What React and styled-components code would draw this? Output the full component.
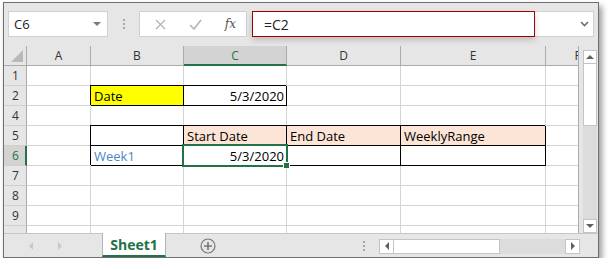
import styled, { createGlobalStyle } from "styled-components";

const GREEN = "#217346";

const Global = createGlobalStyle`
  body {
    margin: 0;
    background: #fff;
    font-family: "Open Sans", "Liberation Sans", sans-serif;
  }
`;

const Window = styled.div`
  box-sizing: border-box;
  margin: 2px 0 0 3px;
  width: 596px;
  height: 256px;
  border: 1px solid #6e6e6e;
  background: #e6e6e6;
  box-shadow: 3px 4px 6px rgba(0, 0, 0, 0.4);
  display: flex;
  flex-direction: column;
  overflow: hidden;
`;

const FormulaBar = styled.div`
  display: flex;
  height: 26px;
  margin: 8px 0 9px 4px;
`;

const NameBox = styled.div`
  box-sizing: border-box;
  width: 100px;
  background: #fff;
  border: 1px solid #d0d0d0;
  display: flex;
  align-items: center;
  justify-content: space-between;
  padding: 0 6px 0 5px;
  font-size: 13px;
  color: #222;
`;

const Caret = styled.span`
  width: 0;
  height: 0;
  border-left: 4px solid transparent;
  border-right: 4px solid transparent;
  border-top: 4px solid #7a7a7a;
`;

const Grip = styled.div`
  width: 31px;
  display: flex;
  flex-direction: column;
  align-items: center;
  justify-content: center;
  gap: 2px;

  span {
    width: 2px;
    height: 2px;
    background: #a8a8a8;
  }
`;

const FxBox = styled.div`
  box-sizing: border-box;
  width: 108px;
  margin-right: 5px;
  background: #fff;
  border: 1px solid #d0d0d0;
  display: flex;
  align-items: center;
  padding: 0 10px 0 15px;
  justify-content: space-between;
`;

const FxLabel = styled.span`
  font-family: "DejaVu Serif", "Liberation Serif", serif;
  font-style: italic;
  font-size: 12px;
  color: #555;
`;

const FormulaInput = styled.div`
  box-sizing: border-box;
  width: 283px;
  background: #fff;
  border: 1px solid #a00000;
  box-shadow: 0 3px 6px rgba(0, 0, 0, 0.18);
  padding: 0 11px;
  display: flex;
  align-items: center;
  font-size: 14px;
  color: #222;
  position: relative;
  z-index: 1;
`;

const Expand = styled.div`
  box-sizing: border-box;
  width: 59px;
  background: #fff;
  border: 1px solid #d0d0d0;
  border-left: none;
  display: flex;
  align-items: center;
  justify-content: flex-end;
  padding-right: 4px;
`;

const SheetArea = styled.div`
  display: flex;
  height: 187px;
`;

const Grid = styled.div`
  box-sizing: border-box;
  width: 575px;
  border-right: 1px solid #ababab;
  overflow: hidden;
  display: grid;
  grid-template-columns: 23px 64px 93px 103px 114px 145px 64px;
  grid-auto-rows: 20px;
  background: #fff;
`;

const Corner = styled.div`
  box-sizing: border-box;
  background: #e6e6e6;
  border-right: 1px solid #ababab;
  border-bottom: 1px solid #ababab;
  position: relative;

  &::after {
    content: "";
    position: absolute;
    right: 3px;
    bottom: 3px;
    border-left: 12px solid transparent;
    border-bottom: 12px solid #b9b9b9;
  }
`;

const ColHead = styled.div`
  box-sizing: border-box;
  background: ${(p) => (p.$active ? "#d3d3d3" : "#e6e6e6")};
  border-right: 1px solid #ababab;
  border-bottom: ${(p) => (p.$active ? `2px solid ${GREEN}` : "1px solid #ababab")};
  display: flex;
  align-items: center;
  justify-content: center;
  font-size: 12px;
  color: ${(p) => (p.$active ? GREEN : "#333")};
`;

const RowHead = styled.div`
  box-sizing: border-box;
  background: ${(p) => (p.$active ? "#d3d3d3" : "#e6e6e6")};
  border-right: ${(p) => (p.$active ? `2px solid ${GREEN}` : "1px solid #ababab")};
  border-bottom: 1px solid #d0d0d0;
  display: flex;
  align-items: center;
  padding-left: 8px;
  font-size: 12px;
  color: ${(p) => (p.$active ? GREEN : "#333")};
`;

const Cell = styled.div`
  box-sizing: border-box;
  position: relative;
  background: ${(p) => p.$bg || "#fff"};
  border-right: 1px solid ${(p) => (p.$box ? "#000" : "#d4d4d4")};
  border-bottom: 1px solid ${(p) => (p.$box ? "#000" : "#d4d4d4")};
  box-shadow: ${(p) => (p.$box ? "-1px -1px 0 #000" : "none")};
  display: flex;
  align-items: flex-end;
  justify-content: ${(p) => (p.$right ? "flex-end" : "flex-start")};
  padding: 0 2px 0 3px;
  font-size: 13px;
  line-height: 18px;
  color: ${(p) => p.$color || "#000"};
  white-space: nowrap;
`;

const Selection = styled.div`
  position: absolute;
  z-index: 2;
  left: -2px;
  top: -2px;
  right: -2px;
  bottom: -2px;
  border: 2px solid ${GREEN};

  &::after {
    content: "";
    position: absolute;
    right: -4px;
    bottom: -4px;
    width: 5px;
    height: 5px;
    background: ${GREEN};
    border: 1px solid #fff;
  }
`;

const VScroll = styled.div`
  flex: 1;
  display: flex;
  flex-direction: column;
  padding: 4px 1px 0 4px;
`;

const ScrollBtn = styled.div`
  box-sizing: border-box;
  width: 14px;
  height: 14px;
  background: #fff;
  border: 1px solid #c4c4c4;
  display: flex;
  align-items: center;
  justify-content: center;
`;

const VTrack = styled.div`
  flex: 1;
  width: 14px;
  background: #dcdcdc;
  display: flex;
  flex-direction: column;
`;

const VThumb = styled.div`
  box-sizing: border-box;
  height: 62px;
  background: #fff;
  border: 1px solid #c4c4c4;
  border-top: none;
`;

const Tri = styled.span`
  width: 0;
  height: 0;
  ${(p) =>
    p.$dir === "up" &&
    `border-left:4px solid transparent;border-right:4px solid transparent;border-bottom:4px solid #606060;`}
  ${(p) =>
    p.$dir === "down" &&
    `border-left:4px solid transparent;border-right:4px solid transparent;border-top:4px solid #606060;`}
  ${(p) =>
    p.$dir === "left" &&
    `border-top:4px solid transparent;border-bottom:4px solid transparent;border-right:4px solid ${p.$c || "#606060"};`}
  ${(p) =>
    p.$dir === "right" &&
    `border-top:4px solid transparent;border-bottom:4px solid transparent;border-left:4px solid ${p.$c || "#606060"};`}
`;

const TabBar = styled.div`
  flex: 1;
  display: flex;
  align-items: stretch;
  border-top: 1px solid #c6c6c6;
`;

const TabNav = styled.div`
  width: 98px;
  display: flex;
  align-items: center;
  padding-left: 25px;
  gap: 25px;
  box-sizing: border-box;
`;

const SheetTab = styled.div`
  box-sizing: border-box;
  width: 64px;
  margin-top: -1px;
  background: #fff;
  border-left: 1px solid #b4b4b4;
  border-right: 1px solid #b4b4b4;
  border-bottom: 2px solid ${GREEN};
  display: flex;
  align-items: center;
  justify-content: center;
  font-size: 14px;
  font-weight: bold;
  color: ${GREEN};
`;

const AddSheet = styled.div`
  width: 84px;
  display: flex;
  align-items: center;
  justify-content: center;
`;

const HGrip = styled(Grip)`
  width: 0;
  flex: 1;
  align-items: flex-end;
  padding-right: 14px;
`;

const HScroll = styled.div`
  display: flex;
  align-self: center;
  width: 201px;
  height: 15px;
  margin-right: 18px;
  margin-top: 1px;
`;

const HBtn = styled(ScrollBtn)`
  width: 15px;
  height: 15px;
`;

const HThumb = styled.div`
  box-sizing: border-box;
  width: 106px;
  background: #fff;
  border: 1px solid #c4c4c4;
  border-left: none;
`;

const HTrack = styled.div`
  flex: 1;
  background: #dcdcdc;
`;

const cols = ["A", "B", "C", "D", "E", "F"];
const PEACH = "#fce4d6";

const rows = [
  { n: "1", cells: {} },
  { n: "2", cells: { B: { text: "Date", bg: "#ffff00", box: true }, C: { text: "5/3/2020", right: true, box: true } } },
  { n: "4", cells: {} },
  {
    n: "5",
    cells: {
      B: { box: true },
      C: { text: "Start Date", bg: PEACH, box: true },
      D: { text: "End Date", bg: PEACH, box: true },
      E: { text: "WeeklyRange", bg: PEACH, box: true },
    },
  },
  {
    n: "6",
    active: true,
    cells: {
      B: { text: "Week1", color: "#4a86c8", box: true },
      C: { text: "5/3/2020", right: true, box: true, sel: true },
      D: { box: true },
      E: { box: true },
    },
  },
  { n: "7", cells: {} },
  { n: "8", cells: {} },
  { n: "9", cells: {} },
  { n: "", cells: {} },
];

function Sheet() {
  return (
    <Grid>
      <Corner />
      {cols.map((c) => (
        <ColHead key={c} $active={c === "C"}>
          {c}
        </ColHead>
      ))}
      {rows.map((r, i) => [
        <RowHead key={`h${i}`} $active={r.active}>
          {r.n}
        </RowHead>,
        ...cols.map((c) => {
          const d = r.cells[c] || {};
          return (
            <Cell key={`${i}${c}`} $bg={d.bg} $box={d.box} $right={d.right} $color={d.color}>
              {d.text}
              {d.sel && <Selection />}
            </Cell>
          );
        }),
      ])}
    </Grid>
  );
}

export default function App() {
  return (
    <>
      <Global />
      <Window>
        <FormulaBar>
          <NameBox>
            C6
            <Caret />
          </NameBox>
          <Grip>
            <span />
            <span />
            <span />
          </Grip>
          <FxBox>
            <svg width="11" height="11" viewBox="0 0 11 11">
              <path d="M1 1 L10 10 M10 1 L1 10" stroke="#b4b4b4" strokeWidth="1.3" />
            </svg>
            <svg width="13" height="11" viewBox="0 0 13 11">
              <path d="M1 6 L5 10 L12 1" stroke="#b4b4b4" strokeWidth="1.6" fill="none" />
            </svg>
            <FxLabel>fx</FxLabel>
          </FxBox>
          <FormulaInput>=C2</FormulaInput>
          <Expand>
            <svg width="9" height="6" viewBox="0 0 9 6">
              <path d="M1 1 L4.5 4.5 L8 1" stroke="#707070" strokeWidth="1.6" fill="none" />
            </svg>
          </Expand>
        </FormulaBar>
        <SheetArea>
          <Sheet />
          <VScroll>
            <ScrollBtn>
              <Tri $dir="up" />
            </ScrollBtn>
            <VTrack>
              <VThumb />
            </VTrack>
            <ScrollBtn>
              <Tri $dir="down" />
            </ScrollBtn>
          </VScroll>
        </SheetArea>
        <TabBar>
          <TabNav>
            <Tri $dir="left" $c="#c8c8c8" />
            <Tri $dir="right" $c="#c8c8c8" />
          </TabNav>
          <SheetTab>Sheet1</SheetTab>
          <AddSheet>
            <svg width="16" height="16" viewBox="0 0 16 16">
              <circle cx="8" cy="8" r="7" stroke="#777" strokeWidth="1.2" fill="none" />
              <path d="M8 4 V12 M4 8 H12" stroke="#777" strokeWidth="1.6" />
            </svg>
          </AddSheet>
          <HGrip>
            <span />
            <span />
            <span />
          </HGrip>
          <HScroll>
            <HBtn>
              <Tri $dir="left" />
            </HBtn>
            <HThumb />
            <HTrack />
            <HBtn>
              <Tri $dir="right" />
            </HBtn>
          </HScroll>
        </TabBar>
      </Window>
    </>
  );
}
